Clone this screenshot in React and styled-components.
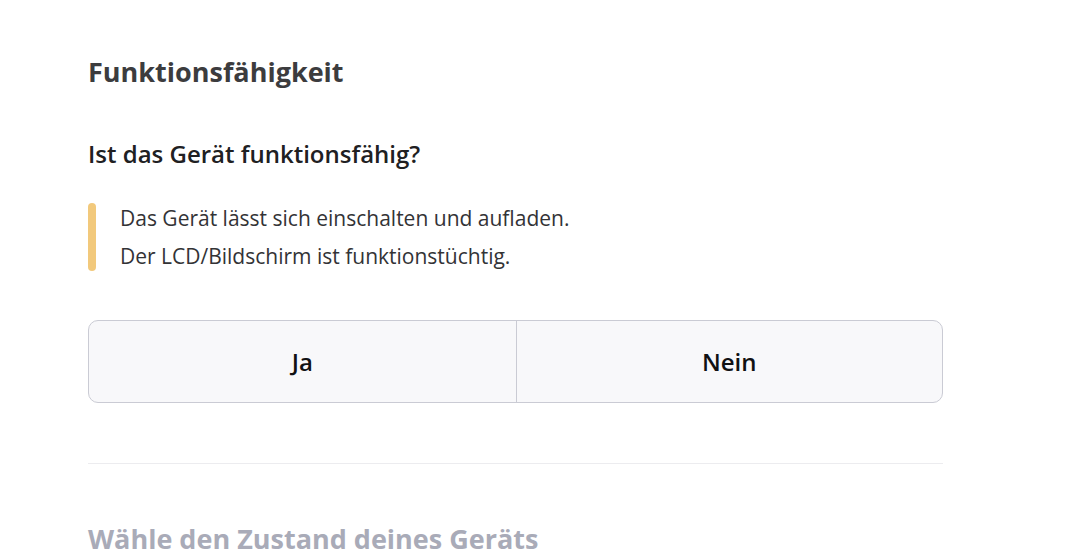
import React from "react";
import styled, { createGlobalStyle } from "styled-components";

const Global = createGlobalStyle`
  html, body { margin: 0; padding: 0; background: #ffffff; }
  body { font-family: "Open Sans", "Noto Sans", sans-serif; }
  * { box-sizing: border-box; }
`;

const Page = styled.main`
  width: 1067px;
  height: 553px;
  overflow: hidden;
  padding: 54px 0 0 88px;
`;

const Section = styled.section`
  width: 855px;
  display: flex;
  flex-direction: column;
`;

const Title = styled.h2`
  margin: 0;
  font-size: 27px;
  line-height: 36px;
  font-weight: 700;
  color: ${(p) => (p.$muted ? "#a9abb8" : "#3c3c3e")};
`;

const Question = styled.h3`
  margin: 48px 0 0;
  font-size: 24px;
  line-height: 32px;
  font-weight: 600;
  color: #202022;
`;

const Hint = styled.div`
  margin-top: 29px;
  display: flex;
  gap: 24px;
`;

const Bar = styled.div`
  width: 8px;
  margin: 4px 0;
  border-radius: 4px;
  background: #f2c97c;
  flex: none;
`;

const HintList = styled.div`
  display: flex;
  flex-direction: column;
`;

const HintLine = styled.p`
  margin: 0;
  font-size: 21px;
  line-height: 38px;
  color: #333336;
`;

const Choices = styled.div`
  margin-top: 45px;
  display: grid;
  grid-template-columns: 1fr 1fr;
  height: 83px;
  border: 1px solid #cacbd4;
  border-radius: 10px;
  background: #f8f8fa;
  overflow: hidden;
`;

const Choice = styled.button`
  all: unset;
  display: flex;
  align-items: center;
  justify-content: center;
  font-family: "Open Sans", "Noto Sans", sans-serif;
  font-size: 24px;
  font-weight: 600;
  color: #111113;
  border-left: ${(p) => (p.$divider ? "1px solid #cacbd4" : "none")};
`;

const Rule = styled.hr`
  margin: 60px 0 0;
  border: none;
  border-top: 1px solid #ececef;
  height: 0;
`;

const NextTitle = styled(Title)`
  margin-top: 57px;
`;

export default function App() {
  return (
    <>
      <Global />
      <Page>
        <Section>
          <Title>Funktionsfähigkeit</Title>
          <Question>Ist das Gerät funktionsfähig?</Question>
          <Hint>
            <Bar />
            <HintList>
              <HintLine>Das Gerät lässt sich einschalten und aufladen.</HintLine>
              <HintLine>Der LCD/Bildschirm ist funktionstüchtig.</HintLine>
            </HintList>
          </Hint>
          <Choices>
            <Choice>Ja</Choice>
            <Choice $divider>Nein</Choice>
          </Choices>
          <Rule />
          <NextTitle $muted>Wähle den Zustand deines Geräts</NextTitle>
        </Section>
      </Page>
    </>
  );
}
